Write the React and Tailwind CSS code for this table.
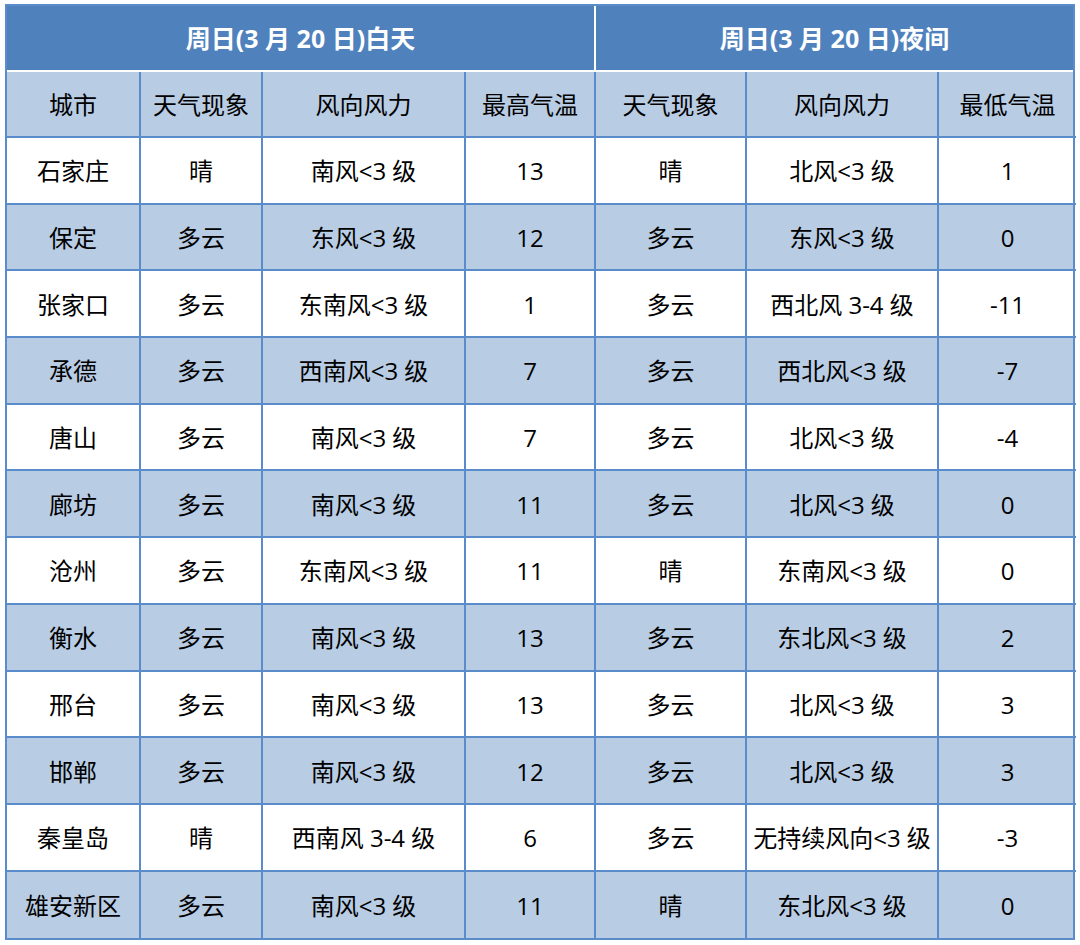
const cols = "grid-cols-[134px_122px_203px_130px_151px_192px_137px]";

const rows = [
  ["石家庄", "晴", "南风<3 级", "13", "晴", "北风<3 级", "1"],
  ["保定", "多云", "东风<3 级", "12", "多云", "东风<3 级", "0"],
  ["张家口", "多云", "东南风<3 级", "1", "多云", "西北风 3-4 级", "-11"],
  ["承德", "多云", "西南风<3 级", "7", "多云", "西北风<3 级", "-7"],
  ["唐山", "多云", "南风<3 级", "7", "多云", "北风<3 级", "-4"],
  ["廊坊", "多云", "南风<3 级", "11", "多云", "北风<3 级", "0"],
  ["沧州", "多云", "东南风<3 级", "11", "晴", "东南风<3 级", "0"],
  ["衡水", "多云", "南风<3 级", "13", "多云", "东北风<3 级", "2"],
  ["邢台", "多云", "南风<3 级", "13", "多云", "北风<3 级", "3"],
  ["邯郸", "多云", "南风<3 级", "12", "多云", "北风<3 级", "3"],
  ["秦皇岛", "晴", "西南风 3-4 级", "6", "多云", "无持续风向<3 级", "-3"],
  ["雄安新区", "多云", "南风<3 级", "11", "晴", "东北风<3 级", "0"],
];

const heads = ["城市", "天气现象", "风向风力", "最高气温", "天气现象", "风向风力", "最低气温"];

export default function App() {
  return (
    <div
      className="w-[1080px] h-[945px] bg-white pt-[4px] pl-[5px]"
      style={{ fontFamily: '"Open Sans", "Noto Sans CJK SC", sans-serif' }}
    >
      <div className="w-[1070px] border-2 border-[#5a8ccb]">
        <div className="grid grid-cols-[589px_477px] h-[66px] bg-[#4f81bd] text-white font-bold text-[25px] border-b-2 border-white">
          <div className="flex items-center justify-center border-r-2 border-white pt-[1px]">周日(3 月 20 日)白天</div>
          <div className="flex items-center justify-center pt-[1px]">周日(3 月 20 日)夜间</div>
        </div>
        <div className={`grid ${cols} h-[66px] bg-[#b8cce4] text-[24px] text-black`}>
          {heads.map((h, i) => (
            <div
              key={i}
              className={`flex items-center justify-center pt-[2px] border-b-2 border-[#5a8ccb] ${i < 6 ? "border-r-2" : ""}`}
            >
              {h}
            </div>
          ))}
        </div>
        {rows.map((r, ri) => (
          <div
            key={ri}
            className={`grid ${cols} h-[66.7px] text-[24px] text-black ${ri % 2 ? "bg-[#b8cce4]" : "bg-white"}`}
          >
            {r.map((c, i) => (
              <div
                key={i}
                className={`flex items-center justify-center pt-[2px] whitespace-nowrap border-[#5a8ccb] ${i < 6 ? "border-r-2" : ""} ${ri < rows.length - 1 ? "border-b-2" : ""}`}
              >
                {c}
              </div>
            ))}
          </div>
        ))}
      </div>
    </div>
  );
}
